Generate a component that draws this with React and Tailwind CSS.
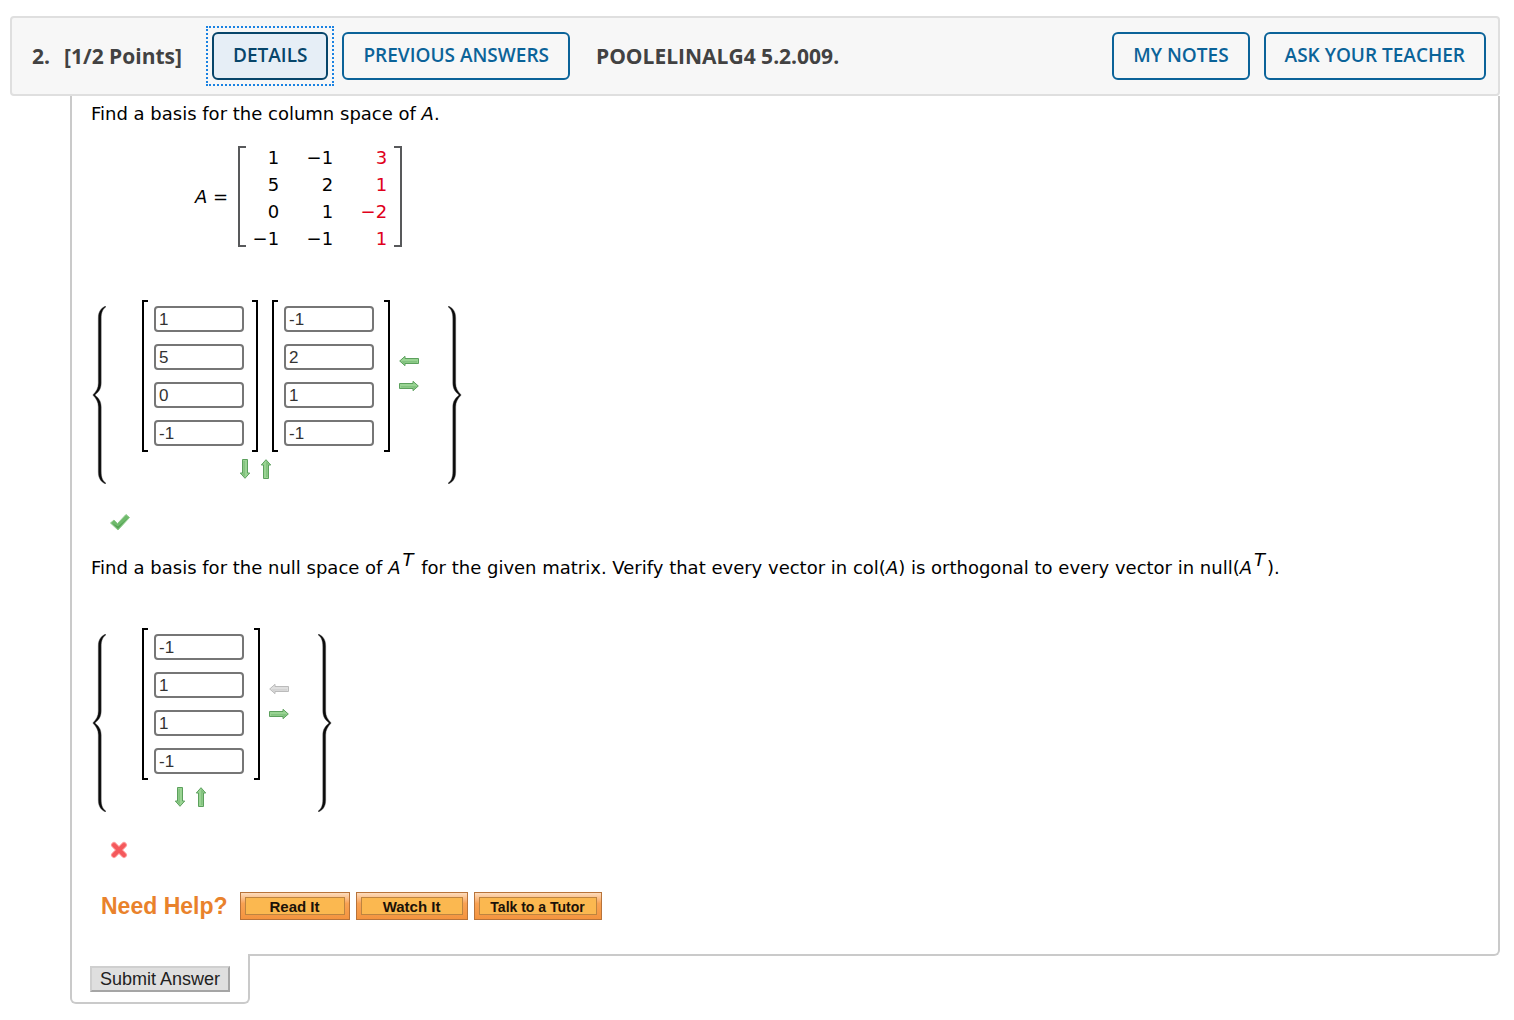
const SANS = "font-['Verdana','DejaVu_Sans',sans-serif]";
const ARIAL = "font-['Liberation_Sans',Arial,sans-serif]";

function HeaderButton({ children, active }) {
  const tone = active
    ? "border-[#07456a] bg-[#e6eef6] text-[#07456a]"
    : "border-[#0b6399] bg-[#f7f7f7] text-[#0b6399]";
  const ring = active ? "outline-2 outline-dotted outline-[#1a82e2] outline-offset-4" : "";
  return (
    <div className={`shrink-0 ${ring}`}>
      <button
        type="button"
        className={`block h-12 rounded-md border-2 px-[19px] pb-0.5 text-[19px] leading-7 font-semibold whitespace-nowrap ${tone}`}
      >
        {children}
      </button>
    </div>
  );
}

function Bracket({ side, className }) {
  return (
    <span
      aria-hidden="true"
      className={`block border-y-2 ${side === "left" ? "border-l-2" : "border-r-2"} ${className}`}
    />
  );
}

function Brace({ side }) {
  return (
    <svg
      width="14"
      height="178"
      viewBox="0 0 14 178"
      aria-hidden="true"
      className={`mt-1.5 shrink-0 ${side === "right" ? "-scale-x-100" : ""}`}
    >
      <path
        d="M13.500 0C9.500 2 6.300 5 6.300 12V77C6.300 82 4.500 85 .8 89C4.500 93 6.300 96 6.300 101V166C6.300 173 9.500 176 13.500 178L13.800 177C11 175 9.200 172 9.200 165V101C9.200 95 6.500 92 3 89C6.500 86 9.200 83 9.200 77V13C9.200 6 11 3 13.800 1Z"
        fill="#0a0a0a"
        stroke="#555"
        strokeWidth=".4"
      />
    </svg>
  );
}

const ROTATION = { right: "", left: "-scale-x-100", down: "rotate-90", up: "-rotate-90" };

function ArrowButton({ dir, label, disabled }) {
  const stroke = disabled ? "#b4b4b4" : "#4b964c";
  const fill = disabled ? "#dcdcdc" : "#8fd088";
  return (
    <button type="button" aria-label={label} disabled={disabled} className="block size-5">
      <svg width="20" height="20" viewBox="0 0 20 20" className={ROTATION[dir]}>
        <path d="M.5 7.500H14V5.300L19.300 10L14 14.700V12.500H.5Z" fill={fill} stroke={stroke} strokeWidth="1" opacity=".9" />
        <path d="M2 10.200H18L14.500 13.200V11.500H2Z" fill={stroke} opacity=".35" />
      </svg>
    </button>
  );
}

function Vector({ values, name }) {
  return (
    <div className="flex w-[116px] justify-between last:w-[118px]">
      <Bracket side="left" className="w-1.5 border-black" />
      <div className="flex grow flex-col gap-3 py-1.5 pl-1.5">
        {values.map((value, i) => (
          <input
            key={i}
            type="text"
            aria-label={`${name}, entry ${i + 1}`}
            defaultValue={value}
            className={`h-[26px] w-[90px] rounded border-2 border-[#767676] bg-white px-[3px] pt-0.5 text-[17px] leading-5 text-[#333] ${ARIAL}`}
          />
        ))}
      </div>
      <Bracket side="right" className="w-1.5 border-black" />
    </div>
  );
}

function BasisInput({ vectors, name, canRemove }) {
  return (
    <div className="flex h-[184px] items-start pl-px">
      <Brace side="left" />
      <div className="ml-3.5 flex flex-col items-center">
        <div className="flex gap-3.5 pl-[22px]">
          {vectors.map((values, i) => (
            <Vector key={i} values={values} name={`${name} vector ${i + 1}`} />
          ))}
        </div>
        <div className="mt-[7px] flex gap-px">
          <ArrowButton dir="down" label="Add row" />
          <ArrowButton dir="up" label="Remove row" />
        </div>
      </div>
      <div className="mt-[51px] mr-[29px] ml-[9px] flex flex-col gap-[5px]">
        <ArrowButton dir="left" label="Remove column" disabled={!canRemove} />
        <ArrowButton dir="right" label="Add column" />
      </div>
      <Brace side="right" />
    </div>
  );
}

function HelpButton({ children, className }) {
  return (
    <button
      type="button"
      className={`h-7 border border-[#b8733a] bg-linear-to-b from-[#fcdcbc] via-[#f9a253] via-40% to-[#f4943f] p-1 font-bold text-[#1c1208] ${ARIAL} ${className}`}
    >
      <span className="flex h-full items-center justify-center border border-[#bd8440] bg-[#fbb850] pt-0.5 whitespace-nowrap">
        {children}
      </span>
    </button>
  );
}

function Transposed() {
  return (
    <>
      <i>A</i>
      <sup className="relative -top-2 mx-0.5 align-baseline text-[18px] leading-none">
        <i>T</i>
      </sup>
    </>
  );
}

const MATRIX = [
  ["1", "−1", "3"],
  ["5", "2", "1"],
  ["0", "1", "−2"],
  ["−1", "−1", "1"],
];

export default function App() {
  return (
    <main className={`pt-4 pr-3.5 pb-4 pl-2.5 text-[18px] leading-6 text-black ${SANS}`}>
      <header className="flex h-20 items-center rounded-sm border-2 border-[#dfdfdf] bg-[#f7f7f7] pr-3 pl-5 font-['Open_Sans',sans-serif] text-[#424242]">
        <h2 className="mr-[30px] flex gap-3.5 text-[21px] font-bold whitespace-nowrap">
          <span>2.</span>
          <span>[1/2 Points]</span>
        </h2>
        <div className="flex items-center gap-3.5">
          <HeaderButton active>DETAILS</HeaderButton>
          <HeaderButton>PREVIOUS ANSWERS</HeaderButton>
        </div>
        <strong className="ml-[26px] text-[21px] font-bold whitespace-nowrap">POOLELINALG4 5.2.009.</strong>
        <div className="ml-auto flex items-center gap-3.5">
          <HeaderButton>MY NOTES</HeaderButton>
          <HeaderButton>ASK YOUR TEACHER</HeaderButton>
        </div>
      </header>

      <div className="ml-[60px]">
        <section className="rounded-br-md border-x-2 border-b-2 border-[#cacaca] px-[19px] pt-1.5 pb-[34px]">
          <p>
            Find a basis for the column space of <i>A</i>.
          </p>

          <div className="mt-5 ml-[104px] flex items-start">
            <span className="mt-[39px] mr-2.5 whitespace-nowrap">
              <i>A</i> =
            </span>
            <Bracket side="left" className="h-[101px] w-2 border-[#58595b]" />
            <table className="-mt-0.5 border-collapse text-right leading-[27px]">
              <tbody>
                {MATRIX.map((row, r) => (
                  <tr key={r}>
                    {row.map((cell, c) => (
                      <td key={c} className="w-[54px] p-0 first:w-[33px] last:text-[#e0001b]">
                        {cell}
                      </td>
                    ))}
                  </tr>
                ))}
              </tbody>
            </table>
            <Bracket side="right" className="ml-[7px] h-[101px] w-2 border-[#58595b]" />
          </div>

          <div className="mt-12">
            <BasisInput name="Column space" vectors={[["1", "5", "0", "-1"], ["-1", "2", "1", "-1"]]} canRemove />
          </div>

          <svg width="22" height="18" viewBox="0 0 22 18" role="img" aria-label="Correct" className="mt-[29px] ml-[18px]">
            <path d="M1.500 10L5 7L8.500 10.500L17 1.500L20.500 4.500L9 17Z" fill="#6fba6c" stroke="#8fcb8c" strokeWidth="1" strokeLinejoin="round" />
            <path d="M3.500 10.500L9 15.500L19 5L9 13.500Z" fill="#3f8f42" opacity=".6" />
          </svg>

          <p className="mt-[25px]">
            Find a basis for the null space of <Transposed /> for the given matrix. Verify that every vector in col(
            <i>A</i>) is orthogonal to every vector in null(
            <Transposed />
            ).
          </p>

          <div className="mt-12">
            <BasisInput name="Null space" vectors={[["-1", "1", "1", "-1"]]} />
          </div>

          <svg width="18" height="18" viewBox="0 0 18 18" role="img" aria-label="Incorrect" className="mt-[29px] ml-[19px]">
            <path d="M4 4L14 14M14 4L4 14" stroke="#ff9a9a" strokeWidth="6" strokeLinecap="round" />
            <path d="M4 4L14 14M14 4L4 14" stroke="#f4595c" strokeWidth="4" strokeLinecap="round" />
          </svg>

          <div className="mt-[33px] ml-2.5 flex items-center">
            <span className={`mr-3 text-[23px] leading-7 font-bold text-[#e9822b] ${ARIAL}`}>Need Help?</span>
            <div className="flex gap-1.5">
              <HelpButton className="w-[110px] text-[15px]">Read It</HelpButton>
              <HelpButton className="w-28 text-[15px]">Watch It</HelpButton>
              <HelpButton className="w-32 text-[14px]">Talk to a Tutor</HelpButton>
            </div>
          </div>
        </section>

        <div className="relative -mt-0.5 h-[50px] w-[180px] rounded-b-md border-x-2 border-b-2 border-[#cacaca] bg-white px-[18px] pt-3">
          <button
            type="button"
            className={`h-[26px] w-[140px] border-2 border-t-[#cfcfcf] border-r-[#a5a5a5] border-b-[#a5a5a5] border-l-[#cfcfcf] bg-[#dfdfdf] text-[18px] leading-5 whitespace-nowrap text-[#222] ${ARIAL}`}
          >
            Submit Answer
          </button>
        </div>
      </div>
    </main>
  );
}
